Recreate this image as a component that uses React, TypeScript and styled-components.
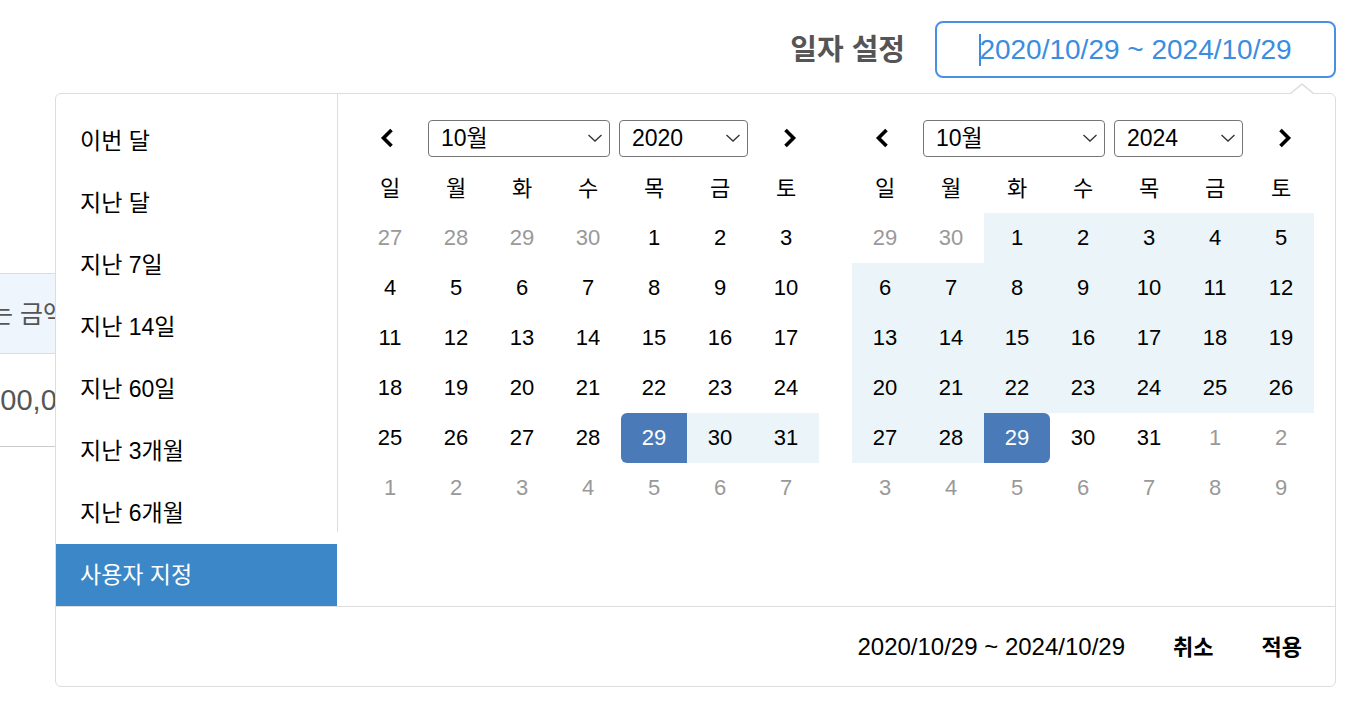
import React from 'react'
import styled, { createGlobalStyle, css } from 'styled-components'

const GlobalStyle = createGlobalStyle`
  body {
    margin: 0;
    background: #fff;
    font-family: 'Liberation Sans', 'Noto Sans CJK KR', sans-serif;
    color: #000;
  }
`;

const Page = styled.div`
  position: relative;
  width: 1370px;
  height: 706px;
  overflow: hidden;
`;

const TopBar = styled.div`
  display: flex;
  justify-content: flex-end;
  align-items: center;
  gap: 30px;
  padding: 21px 34px 0 0;
`;

const Title = styled.h2`
  margin: 0;
  padding-bottom: 6px;
  font-size: 29px;
  font-weight: 700;
  color: #555;
`;

const DateInput = styled.div`
  box-sizing: border-box;
  width: 401px;
  height: 57px;
  border: 2px solid #4a90e2;
  border-radius: 8px;
  display: flex;
  align-items: center;
  justify-content: center;
  font-size: 28px;
  color: #3b8de0;
`;

const Caret = styled.span`
  display: inline-block;
  width: 2px;
  height: 32px;
  background: #3b8de0;
  margin-right: -2px;
`;

const BgTable = styled.div`
  margin: 195px 0 0 -40px;
  width: 900px;
  color: #555;
`;

const BgHeadRow = styled.div`
  height: 81px;
  border-top: 1px solid #ddd;
  border-bottom: 1px solid #ddd;
  background: #eef5fd;
  display: flex;
  align-items: center;
  padding: 0 0 4px 7px;
  box-sizing: border-box;
  font-size: 25px;
`;

const BgRow = styled.div`
  height: 92px;
  border-bottom: 1px solid #ccc;
  display: flex;
  align-items: center;
  padding-left: 0;
  font-size: 29px;
`;

const Popup = styled.div`
  position: absolute;
  top: 93px;
  left: 55px;
  box-sizing: border-box;
  width: 1281px;
  height: 594px;
  background: #fff;
  border: 1px solid #ddd;
  border-radius: 6px;

  &::before,
  &::after {
    content: '';
    position: absolute;
    width: 0;
    height: 0;
    border-style: solid;
    border-color: transparent;
  }
  &::before {
    top: -11px;
    right: 21px;
    border-width: 0 12px 10px;
    border-bottom-color: #ddd;
  }
  &::after {
    top: -9px;
    right: 22px;
    border-width: 0 11px 9px;
    border-bottom-color: #fff;
  }
`;

const Body = styled.div`
  display: flex;
  height: 512px;
`;

const Ranges = styled.ul`
  list-style: none;
  margin: 0;
  padding: 16px 0 0;
  width: 281px;
  flex-shrink: 0;
`;

const RangeItem = styled.li<{ $active?: boolean }>`
  box-sizing: border-box;
  height: 62px;
  display: flex;
  align-items: center;
  padding: 0 0 5px 24px;
  font-size: 23px;
  color: #000;
  ${p => p.$active && css`
    background: #3b87c8;
    color: #fff;
  `}
`;

const Calendar = styled.div<{ $left?: boolean }>`
  align-self: flex-start;
  padding: ${p => (p.$left ? '19px 16px 19px 19px' : '19px 21px 19px 17px')};
  border-left: ${p => (p.$left ? '1px solid #ddd' : 'none')};
`;

const Grid = styled.div`
  display: grid;
  grid-template-columns: repeat(7, 66px);
  grid-auto-rows: 50px;
`;

const NavCell = styled.div<{ $next?: boolean }>`
  display: flex;
  align-items: center;
  justify-content: center;
  padding: ${p => (p.$next ? '0 0 0 8px' : '0 6px 0 0')};
`;

const MonthCell = styled.div`
  grid-column: span 5;
  display: flex;
  align-items: center;
  justify-content: center;
  gap: 9px;
`;

const SelectBox = styled.div<{ $width: number }>`
  box-sizing: border-box;
  width: ${p => p.$width}px;
  height: 37px;
  border: 1px solid #767676;
  border-radius: 4px;
  display: flex;
  align-items: center;
  justify-content: space-between;
  padding: 0 6px 0 12px;
  font-size: 23px;
`;

const SelectText = styled.span<{ $hangul?: boolean }>`
  padding-bottom: ${p => (p.$hangul ? '4px' : '0')};
`;

const DayName = styled.div`
  display: flex;
  align-items: center;
  justify-content: center;
  padding-bottom: 5px;
  font-size: 22px;
`;

const Day = styled.div<{ $off?: boolean; $inRange?: boolean; $start?: boolean; $end?: boolean }>`
  display: flex;
  align-items: center;
  justify-content: center;
  font-size: 22px;
  color: ${p => (p.$off ? '#999' : '#000')};
  ${p => p.$inRange && css`
    background: #ebf4f8;
  `}
  ${p => (p.$start || p.$end) && css`
    background: #4a7bb8;
    color: #fff;
  `}
  ${p => p.$start && css`
    border-radius: 6px 0 0 6px;
  `}
  ${p => p.$end && css`
    border-radius: 0 6px 6px 0;
  `}
`;

const Footer = styled.div`
  box-sizing: border-box;
  height: 80px;
  border-top: 1px solid #ddd;
  display: flex;
  justify-content: flex-end;
  align-items: center;
  gap: 48px;
  padding-right: 33px;
  font-size: 22px;
`;

const SelectedRange = styled.span`
  font-size: 24px;
`;

const FooterButton = styled.button`
  background: none;
  border: none;
  padding: 0 0 4px;
  font: inherit;
  font-weight: 700;
  color: #000;
`;

const Chevron = ({ dir }: { dir: 'left' | 'right' }) => (
  <svg width="16" height="22" viewBox="0 0 16 22">
    <path
      d={dir === 'left' ? 'M12.5 3 L4.5 11 L12.5 19' : 'M3.5 3 L11.5 11 L3.5 19'}
      fill="none"
      stroke="#000"
      strokeWidth="3.6"
    />
  </svg>
);

const SelectArrow = () => (
  <svg width="16" height="10" viewBox="0 0 16 10">
    <path d="M1.5 2 L8 8 L14.5 2" fill="none" stroke="#333" strokeWidth="1.3" />
  </svg>
);

const DAY_NAMES = ['일', '월', '화', '수', '목', '금', '토'];
const RANGES = ['이번 달', '지난 달', '지난 7일', '지난 14일', '지난 60일', '지난 3개월', '지난 6개월', '사용자 지정'];

type Cell = { date: Date; off: boolean };

function buildMonth(year: number, month: number): Cell[] {
  const first = new Date(year, month, 1);
  const start = new Date(year, month, 1 - first.getDay());
  const cells: Cell[] = [];
  for (let i = 0; i < 42; i++) {
    const d = new Date(start.getFullYear(), start.getMonth(), start.getDate() + i);
    cells.push({ date: d, off: d.getMonth() !== month });
  }
  return cells;
}

const RANGE_START = new Date(2020, 9, 29);
const RANGE_END = new Date(2024, 9, 29);

function MonthCalendar({ year, month, left }: { year: number; month: number; left?: boolean }) {
  const cells = buildMonth(year, month);
  return (
    <Calendar $left={left}>
      <Grid>
        <NavCell><Chevron dir="left" /></NavCell>
        <MonthCell>
          <SelectBox $width={182}><SelectText $hangul>{month + 1}월</SelectText><SelectArrow /></SelectBox>
          <SelectBox $width={129}><SelectText>{year}</SelectText><SelectArrow /></SelectBox>
        </MonthCell>
        <NavCell $next><Chevron dir="right" /></NavCell>
        {DAY_NAMES.map(n => <DayName key={n}>{n}</DayName>)}
        {cells.map(({ date, off }) => {
          const t = date.getTime();
          const start = !off && t === RANGE_START.getTime();
          const end = !off && t === RANGE_END.getTime();
          const inRange = !off && t > RANGE_START.getTime() && t < RANGE_END.getTime();
          return (
            <Day key={t} $off={off} $inRange={inRange} $start={start} $end={end}>
              {date.getDate()}
            </Day>
          );
        })}
      </Grid>
    </Calendar>
  );
}

export default function App() {
  return (
    <Page>
      <GlobalStyle />
      <TopBar>
        <Title>일자 설정</Title>
        <DateInput><Caret />2020/10/29 ~ 2024/10/29</DateInput>
      </TopBar>

      <BgTable>
        <BgHeadRow>받는 금액</BgHeadRow>
        <BgRow>1,000,000</BgRow>
      </BgTable>

      <Popup>
        <Body>
          <Ranges>
            {RANGES.map(r => (
              <RangeItem key={r} $active={r === '사용자 지정'}>{r}</RangeItem>
            ))}
          </Ranges>
          <MonthCalendar year={2020} month={9} left />
          <MonthCalendar year={2024} month={9} />
        </Body>
        <Footer>
          <SelectedRange>2020/10/29 ~ 2024/10/29</SelectedRange>
          <FooterButton>취소</FooterButton>
          <FooterButton>적용</FooterButton>
        </Footer>
      </Popup>
    </Page>
  );
}
